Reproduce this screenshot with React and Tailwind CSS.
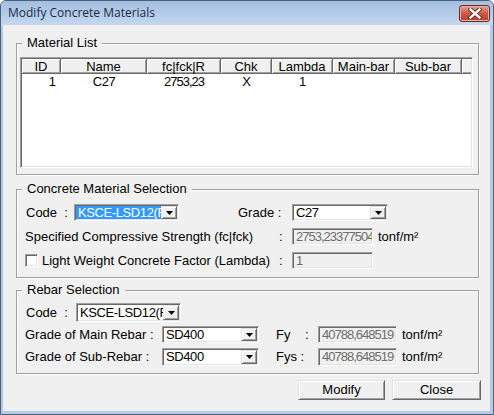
import React from "react";

const sunken =
  "border border-t-[#a0a0a0] border-l-[#a0a0a0] border-b-white border-r-white shadow-[inset_1px_1px_0_#696969,inset_-1px_-1px_0_#e3e3e3]";
const raised =
  "border border-t-[#e3e3e3] border-l-[#e3e3e3] border-b-[#696969] border-r-[#696969] shadow-[inset_1px_1px_0_#ffffff,inset_-1px_-1px_0_#a0a0a0]";

function Arrow() {
  return (
    <svg width="7" height="4" viewBox="0 0 7 4">
      <polygon points="0,0 7,0 3.5,4" fill="#000" />
    </svg>
  );
}

function Combo({ value, className, selected }) {
  return (
    <div className={`${sunken} ${className} bg-white flex p-[1px]`}>
      <div
        className={`flex-1 flex items-center overflow-hidden whitespace-nowrap pl-[2px] tracking-[-0.4px] ${
          selected ? "bg-[#3399ff] text-white" : "text-black"
        }`}
      >
        {value}
      </div>
      <div className={`${raised} w-[16px] shrink-0 bg-[#f0f0f0] flex items-center justify-center`}>
        <Arrow />
      </div>
    </div>
  );
}

function TextBox({ value, className }) {
  return (
    <div
      className={`${sunken} ${className} bg-[#f0f0f0] text-[#6d6d6d] flex items-center pl-[3px] overflow-hidden whitespace-nowrap tracking-[-1px]`}
    >
      {value}
    </div>
  );
}

function Group({ title, className, children }) {
  return (
    <fieldset
      className={`border border-[#a0a0a0] shadow-[inset_1px_1px_0_#ffffff,1px_1px_0_#ffffff] ml-[13px] w-[463px] ${className}`}
    >
      <legend className="ml-[5px] px-[5px] leading-[14px] bg-[#f0f0f0]">{title}</legend>
      {children}
    </fieldset>
  );
}

const columns = [
  { name: "ID", w: "w-[39px]" },
  { name: "Name", w: "w-[86px]" },
  { name: "fc|fck|R", w: "w-[74px]" },
  { name: "Chk", w: "w-[51px]" },
  { name: "Lambda", w: "w-[61px]" },
  { name: "Main-bar", w: "w-[62px]" },
  { name: "Sub-bar", w: "w-[67px]" },
];

const rows = [{ id: "1", name: "C27", fc: "2753,23", chk: "X", lambda: "1" }];

function App() {
  return (
    <div className="w-[494px] h-[415px] bg-[#b4cbe6] border border-[#4b607c] rounded-t-[6px] flex flex-col text-[13px] text-black font-['Liberation_Sans',Arial,sans-serif] overflow-hidden">
      {/* title bar */}
      <div className="h-[24px] flex items-start justify-between bg-gradient-to-b from-[#a3bedf] to-[#c4d8ee] pl-[7px] pr-[3px]">
        <span className="mt-[4px] text-[12px] text-[#1b2a47] font-['Open_Sans','Noto_Sans',sans-serif] leading-[16px]">
          Modify Concrete Materials
        </span>
        <button className="mt-[4px] w-[31px] h-[17px] rounded-[3px] border border-[#6a2a25] bg-gradient-to-b from-[#e8a192] via-[#c95a45] to-[#b8412c] flex items-center justify-center shadow-[inset_0_0_0_1px_#e9b0a4]">
          <svg width="14" height="11" viewBox="0 0 14 11">
            <path d="M2.5 1.5 L11.5 9.5 M11.5 1.5 L2.5 9.5" stroke="#5a2620" strokeWidth="4.2" strokeLinecap="square" />
            <path d="M2.5 1.5 L11.5 9.5 M11.5 1.5 L2.5 9.5" stroke="#ffffff" strokeWidth="2.4" strokeLinecap="square" />
          </svg>
        </button>
      </div>

      {/* client area */}
      <div className="ml-[2px] mr-[3px] mb-[3px] h-[386px] bg-[#f0f0f0] flex flex-col">
        {/* Material List */}
        <Group title="Material List" className="mt-[11px] h-[139px]">
          <div className={`${sunken} ml-[3px] mt-[7px] w-[453px] h-[111px] bg-white p-[1px] overflow-hidden`}>
            <div className="flex h-[15px]">
              {columns.map((c) => (
                <div
                  key={c.name}
                  className={`${c.w} shrink-0 bg-[#f0f0f0] border-r border-b border-r-[#696969] border-b-[#696969] shadow-[inset_1px_1px_0_#ffffff,inset_-1px_-1px_0_#a0a0a0] flex items-center justify-center leading-[13px]`}
                >
                  {c.name}
                </div>
              ))}
              <div className="flex-1 bg-[#f0f0f0] border-b border-b-[#696969] shadow-[inset_1px_1px_0_#ffffff,inset_0_-1px_0_#a0a0a0]" />
            </div>
            {rows.map((r) => (
              <div key={r.id} className="flex h-[15px] items-center leading-[13px]">
                <div className="w-[39px] text-right pr-[5px]">{r.id}</div>
                <div className="w-[86px] text-center tracking-[-0.5px]">{r.name}</div>
                <div className="w-[74px] text-center tracking-[-1px]">{r.fc}</div>
                <div className="w-[51px] text-center">{r.chk}</div>
                <div className="w-[61px] text-center">{r.lambda}</div>
              </div>
            ))}
          </div>
        </Group>

        {/* Concrete Material Selection */}
        <Group title="Concrete Material Selection" className="mt-[7px] h-[96px]">
          <div className="flex items-center h-[17px] mt-[8px] pl-[9px]">
            <span className="w-[48px] whitespace-pre">Code  :</span>
            <Combo value="KSCE-LSD12(RC)" className="w-[105px] h-[17px]" selected />
            <span className="ml-[59px] w-[54px] whitespace-pre">Grade :</span>
            <Combo value="C27" className="w-[96px] h-[17px]" />
          </div>
          <div className="flex items-center h-[17px] mt-[7px] pl-[8px]">
            <span className="w-[254px] whitespace-nowrap">Specified Compressive Strength (fc|fck)</span>
            <span className="w-[13px]">:</span>
            <TextBox value="2753,23377504" className="w-[81px] h-[17px]" />
            <span className="ml-[5px]">tonf/m²</span>
          </div>
          <div className="flex items-center h-[17px] mt-[7px] pl-[8px]">
            <span className={`${sunken} w-[13px] h-[13px] bg-white`} />
            <span className="ml-[4px] w-[237px] whitespace-nowrap">Light Weight Concrete Factor (Lambda)</span>
            <span className="w-[13px]">:</span>
            <TextBox value="1" className="w-[81px] h-[17px]" />
          </div>
        </Group>

        {/* Rebar Selection */}
        <Group title="Rebar Selection" className="mt-[5px] h-[91px]">
          <div className="flex items-center h-[19px] mt-[6px] pl-[9px]">
            <span className="w-[50px] whitespace-pre">Code  :</span>
            <Combo value="KSCE-LSD12(RC)" className="w-[105px] h-[19px]" />
          </div>
          <div className="flex items-center h-[17px] mt-[4px] pl-[8px]">
            <span className="w-[137px] whitespace-nowrap">Grade of Main Rebar :</span>
            <Combo value="SD400" className="w-[97px] h-[17px]" />
            <span className="ml-[17px] w-[42px] whitespace-pre">Fy    :</span>
            <TextBox value="40788,648519" className="w-[79px] h-[17px]" />
            <span className="ml-[5px]">tonf/m²</span>
          </div>
          <div className="flex items-center h-[18px] mt-[5px] pl-[8px]">
            <span className="w-[137px] whitespace-nowrap">Grade of Sub-Rebar :</span>
            <Combo value="SD400" className="w-[97px] h-[18px]" />
            <span className="ml-[17px] w-[42px] whitespace-pre">Fys :</span>
            <TextBox value="40788,648519" className="w-[79px] h-[18px]" />
            <span className="ml-[5px]">tonf/m²</span>
          </div>
        </Group>

        {/* buttons */}
        <div className="flex justify-end gap-[7px] mt-[6px] mr-[9px]">
          <button className={`${raised} w-[87px] h-[20px] bg-[#f0f0f0] leading-[14px]`}>Modify</button>
          <button className={`${raised} w-[89px] h-[20px] bg-[#f0f0f0] leading-[14px]`}>Close</button>
        </div>
      </div>
    </div>
  );
}

export default App;
